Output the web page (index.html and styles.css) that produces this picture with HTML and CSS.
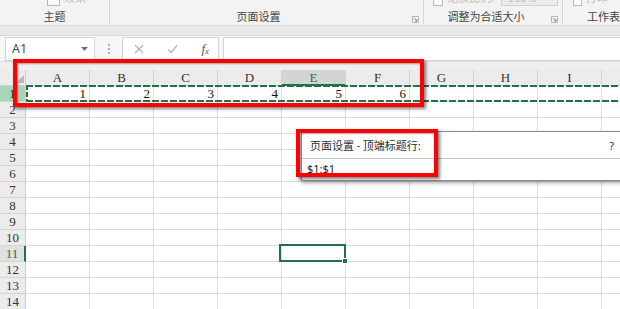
FILE: index.html
```html
<!DOCTYPE html>
<html lang="zh">
<head>
<meta charset="utf-8">
<title>页面设置</title>
<link rel="stylesheet" href="styles.css">
</head>
<body>
<div class="app">
  <div class="ribbon">
    <div class="group g1">
      <div class="gtop pad1"><span class="ico"></span><span class="ghost">效果</span></div>
      <div class="glabel">主题</div>
    </div>
    <div class="group g2">
      <div class="gtop"></div>
      <div class="glabel lab2">页面设置</div>
      <span class="launcher"><svg width="7" height="7" viewBox="0 0 7 7"><path d="M0.5 0.5h6v6h-6z" fill="none" stroke="#b5b5b5"/><path d="M2 2l3 3M5 3v2H3" fill="none" stroke="#8a8a8a"/></svg></span>
    </div>
    <div class="group g3">
      <div class="gtop pad3"><span class="ico small"></span><span class="ghost">缩放比例:</span><span class="dd"><span class="ghost">100%</span><svg width="7" height="5" viewBox="0 0 7 5"><path d="M1 0l2.5 3L6 0" fill="none" stroke="#b0b0b0"/></svg></span></div>
      <div class="glabel lab3">调整为合适大小</div>
      <span class="launcher"><svg width="7" height="7" viewBox="0 0 7 7"><path d="M0.5 0.5h6v6h-6z" fill="none" stroke="#b5b5b5"/><path d="M2 2l3 3M5 3v2H3" fill="none" stroke="#8a8a8a"/></svg></span>
    </div>
    <div class="group g4">
      <div class="gtop pad4"><span class="ico chk"></span><span class="ghost">打印</span></div>
      <div class="glabel lab4">工作表选项</div>
    </div>
  </div>
  <div class="band"></div>
  <div class="fbar">
    <div class="namebox"><span class="ref">A1</span><svg width="7" height="4" viewBox="0 0 7 4"><path d="M0 0h7L3.5 4z" fill="#6e6e6e"/></svg></div>
    <div class="dots"><i></i><i></i><i></i></div>
    <div class="fxbox">
      <svg width="10" height="10" viewBox="0 0 10 10"><path d="M1 1l8 8M9 1l-8 8" stroke="#b3b3b3" stroke-width="1.2"/></svg>
      <svg width="11" height="10" viewBox="0 0 11 10"><path d="M1 5.5l3 3L10 1.5" fill="none" stroke="#b3b3b3" stroke-width="1.3"/></svg>
      <span class="fx"><i>f</i><sub>x</sub></span>
    </div>
    <div class="finput"></div>
  </div>
  <div class="gap"></div>
  <div class="sheet">
    <div class="grid">
      <div class="corner"><svg width="8" height="8" viewBox="0 0 8 8"><path d="M8 0v8H0z" fill="#b8b8b8"/></svg></div>
      <div class="ch">A</div><div class="ch">B</div><div class="ch">C</div><div class="ch">D</div><div class="ch cur">E</div><div class="ch">F</div><div class="ch">G</div><div class="ch">H</div><div class="ch">I</div><div class="ch">J</div>

      <div class="rh sel">1</div><div class="c">1</div><div class="c">2</div><div class="c">3</div><div class="c">4</div><div class="c">5</div><div class="c">6</div><div class="c"></div><div class="c"></div><div class="c"></div><div class="c"></div>
      <div class="rh">2</div><div class="c"></div><div class="c"></div><div class="c"></div><div class="c"></div><div class="c"></div><div class="c"></div><div class="c"></div><div class="c"></div><div class="c"></div><div class="c"></div>
      <div class="rh">3</div><div class="c"></div><div class="c"></div><div class="c"></div><div class="c"></div><div class="c"></div><div class="c"></div><div class="c"></div><div class="c"></div><div class="c"></div><div class="c"></div>
      <div class="rh">4</div><div class="c"></div><div class="c"></div><div class="c"></div><div class="c"></div><div class="c"></div><div class="c"></div><div class="c"></div><div class="c"></div><div class="c"></div><div class="c"></div>
      <div class="rh">5</div><div class="c"></div><div class="c"></div><div class="c"></div><div class="c"></div><div class="c"></div><div class="c"></div><div class="c"></div><div class="c"></div><div class="c"></div><div class="c"></div>
      <div class="rh">6</div><div class="c"></div><div class="c"></div><div class="c"></div><div class="c"></div><div class="c"></div><div class="c"></div><div class="c"></div><div class="c"></div><div class="c"></div><div class="c"></div>
      <div class="rh">7</div><div class="c"></div><div class="c"></div><div class="c"></div><div class="c"></div><div class="c"></div><div class="c"></div><div class="c"></div><div class="c"></div><div class="c"></div><div class="c"></div>
      <div class="rh">8</div><div class="c"></div><div class="c"></div><div class="c"></div><div class="c"></div><div class="c"></div><div class="c"></div><div class="c"></div><div class="c"></div><div class="c"></div><div class="c"></div>
      <div class="rh">9</div><div class="c"></div><div class="c"></div><div class="c"></div><div class="c"></div><div class="c"></div><div class="c"></div><div class="c"></div><div class="c"></div><div class="c"></div><div class="c"></div>
      <div class="rh">10</div><div class="c"></div><div class="c"></div><div class="c"></div><div class="c"></div><div class="c"></div><div class="c"></div><div class="c"></div><div class="c"></div><div class="c"></div><div class="c"></div>
      <div class="rh act">11</div><div class="c"></div><div class="c"></div><div class="c"></div><div class="c"></div><div class="c"></div><div class="c"></div><div class="c"></div><div class="c"></div><div class="c"></div><div class="c"></div>
      <div class="rh">12</div><div class="c"></div><div class="c"></div><div class="c"></div><div class="c"></div><div class="c"></div><div class="c"></div><div class="c"></div><div class="c"></div><div class="c"></div><div class="c"></div>
      <div class="rh">13</div><div class="c"></div><div class="c"></div><div class="c"></div><div class="c"></div><div class="c"></div><div class="c"></div><div class="c"></div><div class="c"></div><div class="c"></div><div class="c"></div>
      <div class="rh">14</div><div class="c"></div><div class="c"></div><div class="c"></div><div class="c"></div><div class="c"></div><div class="c"></div><div class="c"></div><div class="c"></div><div class="c"></div><div class="c"></div>
    </div>
  </div>

  <div class="ants"></div>
  <div class="active-cell"><span class="handle"></span></div>

  <div class="dialog">
    <div class="dtitle"><span>页面设置 - 顶端标题行:</span><span class="help">?</span></div>
    <div class="dinput">$1:$1</div>
  </div>

  <div class="mark mark1"></div>
  <div class="mark mark2"></div>
</div>
</body>
</html>
```

FILE: styles.css
```css
* { box-sizing: border-box; margin: 0; padding: 0; }

body {
  margin: 0;
  width: 620px;
  height: 309px;
  overflow: hidden;
  background: #ffffff;
  font-family: "Noto Sans CJK SC", "Noto Sans", sans-serif;
}

.app {
  position: relative;
  width: 620px;
  height: 309px;
  overflow: hidden;
}

/* ribbon */
.ribbon {
  display: flex;
  height: 26px;
  background: #f3f3f3;
  border-bottom: 1px solid #d9d9d9;
}
.group {
  position: relative;
  display: flex;
  flex-direction: column;
  flex: none;
  height: 24px;
  border-right: 1px solid #d4d4d4;
}
.g1 { width: 110px; }
.g2 { width: 314px; }
.g3 { width: 139px; }
.g4 { flex: 1; border-right: 0; }

.gtop {
  height: 9px;
  overflow: hidden;
  display: flex;
  align-items: flex-end;
  gap: 4px;
  padding-bottom: 4px;
}
.pad1 { padding-left: 47px; }
.pad3 { padding-left: 9px; }
.pad4 { padding-left: 10px; }

.ghost {
  font-size: 11px;
  line-height: 13px;
  height: 13px;
  color: #bdbdbd;
  white-space: nowrap;
}
.ico {
  width: 13px;
  height: 13px;
  margin-bottom: -2px;
  border: 1px solid #b8b8b8;
  background: #fafafa;
  flex: none;
}
.ico.small { width: 10px; }
.ico.chk { width: 9px; }
.dd {
  display: flex;
  align-items: flex-end;
  justify-content: space-between;
  width: 57px;
  height: 14px;
  margin-left: 3px;
  margin-bottom: -2px;
  padding: 0 4px 1px 6px;
  border: 1px solid #d0d0d0;
  background: #ebebeb;
}
.dd svg { margin-bottom: 2px; }

.glabel {
  height: 16px;
  font-size: 11px;
  line-height: 16px;
  text-align: center;
  color: #444444;
  white-space: nowrap;
}
.lab2 { padding-right: 16px; }
.lab3 { padding-right: 14px; }
.lab4 { text-align: left; padding-left: 24px; }

.launcher {
  position: absolute;
  right: 4px;
  bottom: 1px;
  width: 7px;
  height: 7px;
  line-height: 0;
}

.band {
  height: 10px;
  background: #e8e8e8;
  border-bottom: 1px solid #d9d9d9;
}

/* formula bar */
.fbar {
  display: flex;
  align-items: center;
  height: 26px;
  padding-left: 5px;
  background: #f6f6f6;
  border-bottom: 1px solid #dadada;
}
.namebox {
  display: flex;
  align-items: center;
  justify-content: space-between;
  width: 90px;
  height: 24px;
  padding: 0 6px 0 6px;
  background: #ffffff;
  border: 1px solid #d5d5d5;
}
.ref {
  font-family: "Open Sans", "Noto Sans", sans-serif;
  font-size: 12.5px;
  color: #3c3c3c;
}
.dots {
  display: flex;
  flex-direction: column;
  gap: 2px;
  width: 27px;
  align-items: center;
}
.dots i {
  display: block;
  width: 2px;
  height: 2px;
  background: #b0b0b0;
}
.fxbox {
  display: flex;
  align-items: center;
  justify-content: space-between;
  width: 97px;
  height: 24px;
  padding: 0 9px 0 11px;
  background: #ffffff;
  border: 1px solid #d5d5d5;
}
.fx {
  font-family: "Liberation Serif", serif;
  font-size: 13px;
  color: #505050;
  line-height: 1;
}
.fx i { font-style: italic; }
.fx sub { font-size: 9px; font-style: italic; vertical-align: -1px; }
.finput {
  flex: 1;
  height: 24px;
  margin-left: 4px;
  background: #ffffff;
  border: 1px solid #d5d5d5;
  border-right: 0;
}

.gap {
  height: 8px;
  background: #efefef;
}

/* sheet */
.sheet {
  overflow: hidden;
  width: 620px;
}
.grid {
  display: grid;
  grid-template-columns: 26px repeat(10, 64px);
  grid-auto-rows: 16px;
  width: 666px;
  font-family: "Liberation Serif", "DejaVu Serif", serif;
  font-size: 13px;
}
.corner {
  display: flex;
  align-items: flex-end;
  justify-content: flex-end;
  padding: 0 1px 2px 0;
  background: #ececec;
  border-right: 1px solid #cfcfcf;
  border-bottom: 1px solid #cfcfcf;
}
.corner svg { display: block; }
.ch {
  background: #ececec;
  border-right: 1px solid #d3d3d3;
  border-bottom: 1px solid #cfcfcf;
  text-align: center;
  line-height: 16px;
  color: #333333;
}
.ch.cur {
  background: #d4d4d4;
  color: #217346;
  border-bottom: 2px solid #217346;
}
.rh {
  background: #ececec;
  border-right: 1px solid #cfcfcf;
  border-bottom: 1px solid #d3d3d3;
  text-align: center;
  line-height: 16px;
  color: #333333;
}
.rh.sel {
  background: #a9d6b8;
  color: #1d1d1d;
}
.rh.act {
  background: #e0e0e0;
  color: #217346;
  border-right: 2px solid #217346;
}
.c {
  border-right: 1px solid #dcdcdc;
  border-bottom: 1px solid #dcdcdc;
  text-align: right;
  padding-right: 3px;
  line-height: 16px;
  color: #111111;
  background: #ffffff;
}

/* overlays */
.ants {
  position: absolute;
  left: 26px;
  top: 85px;
  width: 594px;
  height: 17px;
  background-image:
    repeating-linear-gradient(90deg, #217346 0 7px, transparent 7px 9px),
    repeating-linear-gradient(90deg, #217346 0 7px, transparent 7px 9px),
    repeating-linear-gradient(180deg, #217346 0 5px, transparent 5px 7px);
  background-size: 100% 2px, 100% 2px, 2px 100%;
  background-position: 0 0, 0 100%, 0 0;
  background-repeat: no-repeat;
}

.active-cell {
  position: absolute;
  left: 279px;
  top: 244px;
  width: 67px;
  height: 18px;
  border: 2px solid #217346;
}
.handle {
  position: absolute;
  right: -4px;
  bottom: -4px;
  width: 6px;
  height: 6px;
  background: #217346;
  border: 1px solid #ffffff;
}

.dialog {
  position: absolute;
  left: 301px;
  top: 131px;
  width: 330px;
  height: 50px;
  background: #ffffff;
  border: 1px solid #8c8c8c;
  box-shadow: 0 2px 4px rgba(0, 0, 0, 0.35);
}
.dtitle {
  display: flex;
  align-items: center;
  height: 27px;
  padding: 0 16px 0 8px;
  border-bottom: 1px solid #c8c8c8;
  font-size: 11px;
  color: #2e2e2e;
}
.help {
  margin-left: auto;
  font-family: "Noto Sans", sans-serif;
  font-size: 11px;
}
.dinput {
  height: 21px;
  padding-left: 5px;
  font-family: "Noto Sans", sans-serif;
  font-size: 11px;
  line-height: 20px;
  color: #1e1e1e;
}

.mark {
  position: absolute;
  border: 4px solid #ff0000;
  box-shadow: 2px 2px 3px rgba(0, 0, 0, 0.5), inset 1px 1px 2px rgba(0, 0, 0, 0.35);
}
.mark1 {
  left: 13px;
  top: 59px;
  width: 411px;
  height: 48px;
}
.mark2 {
  left: 296px;
  top: 129px;
  width: 142px;
  height: 48px;
}
```
